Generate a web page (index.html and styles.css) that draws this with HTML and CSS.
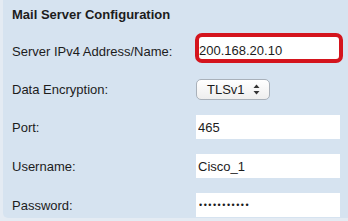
FILE: index.html
```html
<!DOCTYPE html>
<html lang="en">
<head>
    <meta charset="UTF-8">
    <title>Mail Server Configuration</title>
    <link rel="stylesheet" href="styles.css">
</head>
<body>
    <div class="panel">
        <div class="title">Mail Server Configuration</div>

        <div class="row row-first">
            <label class="label label-low" for="server">Server IPv4 Address/Name:</label>
            <div class="highlight">
                <input class="field field-low" id="server" type="text" value="200.168.20.10">
            </div>
        </div>

        <div class="row">
            <span class="label">Data Encryption:</span>
            <div class="select">
                <span>TLSv1</span>
                <svg width="7" height="11" viewBox="0 0 7 11" xmlns="http://www.w3.org/2000/svg">
                    <path d="M3.5 0.5 L6.5 4 L0.5 4 Z" fill="#333"/>
                    <path d="M3.5 10.5 L6.5 7 L0.5 7 Z" fill="#333"/>
                </svg>
            </div>
        </div>

        <div class="row">
            <label class="label" for="port">Port:</label>
            <input class="field" id="port" type="text" value="465">
        </div>

        <div class="row">
            <label class="label" for="user">Username:</label>
            <input class="field" id="user" type="text" value="Cisco_1">
        </div>

        <div class="row">
            <label class="label" for="pass">Password:</label>
            <input class="field field-pass" id="pass" type="password" value="Cisco_1234!">
        </div>
    </div>
</body>
</html>
```

FILE: styles.css
```css
body {
    margin: 0;
    width: 348px;
    height: 221px;
    overflow: hidden;
    background: #e4ebf3;
    font-family: "Liberation Sans", Arial, sans-serif;
    font-size: 13px;
    color: #1c1c1c;
}
.panel {
    margin-left: 3px;
    height: 218px;
    background: #d6e3f0;
    border-bottom-left-radius: 5px;
    padding: 7px 0 0 9px;
    box-sizing: border-box;
    display: flex;
    flex-direction: column;
}
.title {
    font-weight: bold;
    line-height: 15px;
    margin-bottom: 11px;
}
.row {
    display: flex;
    align-items: center;
    margin-bottom: 15px;
}
.row-first {
    margin-bottom: 16px;
}
.label {
    width: 184px;
    flex: none;
    line-height: 15px;
}
.label-low {
    padding-top: 6px;
}
.highlight {
    width: 148px;
    height: 30px;
    margin-left: -1px;
    border: 4px solid #d4141d;
    border-radius: 7px;
    box-sizing: border-box;
    background: #fff;
}
.field {
    width: 144px;
    height: 24px;
    border: none;
    margin: 0;
    padding: 0 2px;
    box-sizing: border-box;
    background: #fff;
    font-family: "Liberation Sans", Arial, sans-serif;
    font-size: 13px;
    color: #1c1c1c;
    outline: none;
}
.field-low {
    width: 100%;
    height: 100%;
    padding: 5px 0 0 0;
    background: transparent;
}
.field-pass {
    font-size: 9px;
    letter-spacing: 1.5px;
    padding-left: 3px;
}
.select {
    width: 74px;
    height: 21px;
    box-sizing: border-box;
    border: 1px solid #a9b1ba;
    border-radius: 5px;
    background: linear-gradient(#ffffff, #eeeeee);
    display: flex;
    align-items: center;
    justify-content: space-between;
    padding: 0 9px 0 10px;
    color: #1c1c1c;
}
```
